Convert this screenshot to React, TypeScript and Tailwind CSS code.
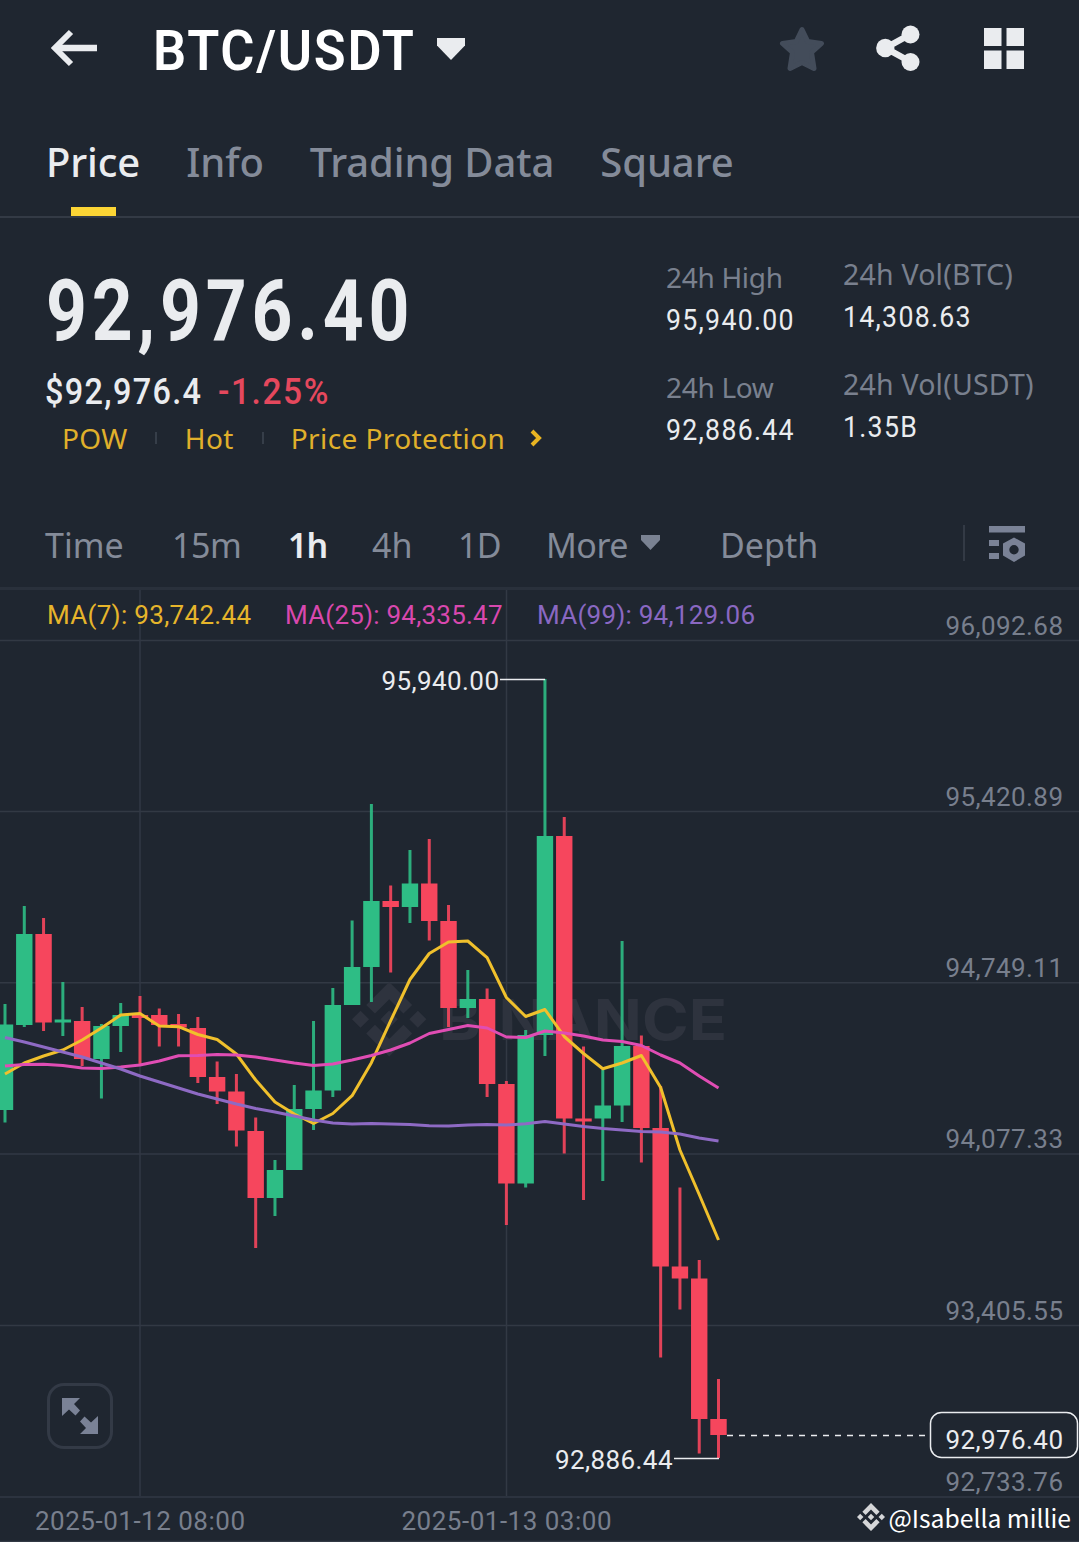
import type { ReactNode } from 'react'
import clsx from 'clsx'

const UP = '#2ebd85'
const DOWN = '#f6465d'

const tabs = ['Price', 'Info', 'Trading Data', 'Square']

// [direction, high, body top, body bottom, low]
type Candle = ['up' | 'down', number, number, number, number]

const candles: Candle[] = [
  ['up', 1004, 1024.5, 1110, 1122.5],
  ['up', 906, 934, 1025, 1027],
  ['down', 918, 934, 1022.5, 1031],
  ['up', 982, 1019.5, 1022.5, 1036],
  ['down', 1007, 1021, 1059, 1066],
  ['up', 1024, 1026, 1059, 1098.5],
  ['up', 1003, 1015, 1026, 1052],
  ['down', 996, 1015, 1018, 1066],
  ['down', 1008.5, 1015, 1025, 1046.5],
  ['down', 1014, 1024, 1027.5, 1046.5],
  ['down', 1017, 1028, 1077, 1083],
  ['down', 1061.5, 1077, 1091.5, 1104],
  ['down', 1074, 1091.5, 1130.5, 1146.5],
  ['down', 1117.5, 1131, 1198, 1248],
  ['up', 1160, 1170, 1198, 1216],
  ['up', 1085, 1109, 1170, 1170],
  ['up', 1021, 1090.5, 1109, 1130],
  ['up', 988, 1005, 1090.5, 1097],
  ['up', 920.5, 967, 1005, 1005],
  ['up', 804, 901, 967, 1002],
  ['down', 885.5, 901, 907, 972.5],
  ['up', 850, 883.5, 907, 923],
  ['down', 839, 883.5, 921, 940.5],
  ['down', 905, 921, 1008, 1027],
  ['up', 970, 999, 1008, 1018],
  ['down', 988.5, 999, 1084, 1097],
  ['down', 1081, 1084, 1183.5, 1225],
  ['up', 1030, 1035, 1183.5, 1187.5],
  ['up', 679, 836, 1035, 1056],
  ['down', 817, 836, 1118.5, 1153.5],
  ['down', 1046.5, 1118.5, 1121.5, 1200],
  ['up', 1070, 1105.5, 1118.5, 1181],
  ['up', 941, 1046, 1105.5, 1122],
  ['down', 1035.5, 1046, 1128, 1162.5],
  ['down', 1086, 1128, 1266.5, 1357.5],
  ['down', 1187.5, 1266.5, 1278.5, 1309.5],
  ['down', 1260, 1278.5, 1419, 1453.5],
  ['down', 1379, 1419, 1435, 1458],
]

const ma7 = [
  1074, 1063, 1056, 1050, 1040, 1028, 1015, 1013.5, 1026, 1026.7, 1034.5, 1039.5, 1054, 1080, 1102, 1114,
  1123.5, 1113.5, 1095.7, 1062.7, 1020.7, 979.5, 953.5, 942, 941, 957.7, 997.5, 1016.5, 1009.5, 1036.5,
  1053.5, 1068.7, 1063, 1055.5, 1087.5, 1150, 1194.5, 1240,
]
const ma25 = [
  1066, 1064.5, 1064.3, 1065.5, 1068, 1068.5, 1067, 1065, 1061, 1055.7, 1055.5, 1054.5, 1055, 1057, 1060,
  1063, 1065.5, 1064, 1060, 1055.5, 1050, 1043, 1033.5, 1029.5, 1025.5, 1028, 1037, 1037.5, 1031, 1033,
  1036, 1040, 1041.5, 1045.5, 1055, 1063, 1076, 1088,
]
const ma99 = [
  1037.5, 1042, 1047, 1052, 1057, 1063, 1069, 1076, 1082, 1088, 1094, 1099, 1104, 1108.5, 1112, 1116, 1120,
  1123, 1124, 1123.5, 1124, 1124.5, 1125.7, 1126, 1125, 1124.5, 1125, 1123.7, 1121.5, 1124, 1126.5, 1128.5,
  1130, 1131.5, 1132, 1134, 1138, 1141,
]

const priceAxis = [
  { y: 640.5, label: '96,092.68' },
  { y: 811.5, label: '95,420.89' },
  { y: 982.7, label: '94,749.11' },
  { y: 1154, label: '94,077.33' },
  { y: 1325.5, label: '93,405.55' },
]

const candleX = (i: number) => 5 + i * 19.284
const toPoints = (values: number[]) => values.map((y, i) => `${candleX(i)},${y}`).join(' ')

function Num({ className, box, children }: { className: string; box: string; children: ReactNode }) {
  return (
    <span className={clsx('block whitespace-nowrap', box)}>
      <span className={clsx('inline-block origin-left font-[Roboto,sans-serif]', className)}>{children}</span>
    </span>
  )
}

function BinanceMark({ className }: { className?: string }) {
  return (
    <svg viewBox="0 0 24 24" className={className} fill="currentColor">
      <path d="M12 0 19.4 7.4 16.6 10.2 12 5.6 7.4 10.2 4.6 7.4Z" />
      <path d="M12 24 19.4 16.6 16.6 13.8 12 18.4 7.4 13.8 4.6 16.6Z" />
      <path d="M12 9.2 14.8 12 12 14.8 9.2 12Z" />
      <path d="M2.75 9.25 5.5 12 2.75 14.75 0 12Z" />
      <path d="M21.25 9.25 24 12 21.25 14.75 18.5 12Z" />
    </svg>
  )
}

function Header() {
  return (
    <header className="flex h-[100px] items-center pl-[51px] pr-[55px]">
      <svg width="46" height="38" viewBox="0 0 46 38" className="-mt-1 shrink-0" fill="none" stroke="#eaecef">
        <path d="M46 19H5" strokeWidth="6.5" />
        <path d="M20 3 4 19 20 35" strokeWidth="6" />
      </svg>
      <h1 className="ml-[56px] mt-[2px] w-[260px]">
        <Num box="" className="scale-x-[0.95] text-[55px] font-semibold leading-[56px] tracking-[1.8px] text-white">
          BTC/USDT
        </Num>
      </h1>
      <svg width="28" height="22" viewBox="0 0 28 22" className="-mt-0.5 ml-[24px]" fill="#eaecef">
        <path d="M0 0H28V7.5L14 22 0 7.5Z" />
      </svg>
      <div className="ml-auto flex items-center">
        <svg width="46" height="48" viewBox="0 0 46 48" className="-mt-0.5" fill="#434c5a" stroke="#434c5a" strokeWidth="5" strokeLinejoin="round">
          <path d="M23 4.5 28.8 16.6 42.5 18.5 32.5 27.5 35 43.5 23 37.5 11 43.5 13.5 27.5 3.5 18.5 17.2 16.6Z" />
        </svg>
        <svg width="44" height="46" viewBox="0 0 44 46" className="-mt-1 ml-[51px]" fill="#eaecef" stroke="#eaecef">
          <path d="M34 9.5 9.5 23 34 36.5" fill="none" strokeWidth="6.5" />
          <circle cx="34.5" cy="9.5" r="9" stroke="none" />
          <circle cx="34.5" cy="37" r="9" stroke="none" />
          <circle cx="9.3" cy="23" r="9.2" stroke="none" />
        </svg>
        <svg width="40" height="41" viewBox="0 0 40 41" className="-mt-1 ml-[64px]" fill="#eaecef">
          <path d="M0 0H17.5V18H0ZM22.5 0H40V18H22.5ZM0 22.5H17.5V41H0ZM22.5 22.5H40V41H22.5Z" />
        </svg>
      </div>
    </header>
  )
}

function Tabs() {
  return (
    <nav className="flex h-[118px] gap-[46px] border-b-2 border-[#333a45] pl-[46px] font-['Noto_Sans',sans-serif] text-[40px] font-medium tracking-[-0.1px]">
      {tabs.map((tab, i) => (
        <div
          key={tab}
          className={clsx(
            'flex flex-col items-center justify-between whitespace-nowrap pt-[34px]',
            i === 0 ? 'text-[#eaecef]' : 'text-[#848b99]',
          )}
        >
          <span className="leading-[56px]">{tab}</span>
          {i === 0 && <span className="h-[9px] w-[45px] bg-[#fcd535]" />}
        </div>
      ))}
    </nav>
  )
}

function Stat({ label, value }: { label: string; value: string }) {
  return (
    <div className="h-[110px]">
      <div className="whitespace-nowrap text-[#79808e]">{label}</div>
      <Num box="mt-[6px] h-[36px]" className="scale-x-[0.92] text-[29px] leading-[36px] tracking-[1.4px] text-[#eaecef]">
        {value}
      </Num>
    </div>
  )
}

function Summary() {
  return (
    <section className="flex h-[282px] font-['Noto_Sans',sans-serif]">
      <div className="w-[666px] pl-[46px] pt-[49px]">
        <Num box="h-[88px]" className="scale-x-[0.83] text-[86px] font-bold leading-[88px] tracking-[5.8px] text-[#eaecef]">
          92,976.40
        </Num>
        <div className="mt-[18px] flex h-[38px] items-center">
          <Num box="-ml-px w-[173px]" className="scale-x-[0.9] text-[36px] font-medium leading-[38px] tracking-[1.5px] text-[#eaecef]">
            $92,976.4
          </Num>
          <Num box="" className="scale-x-[0.93] text-[36px] font-medium leading-[38px] tracking-[1.7px] text-[#e5485d]">
            -1.25%
          </Num>
        </div>
        <div className="mt-[7px] flex h-[40px] items-center pl-4 text-[28px] tracking-[0.4px] text-[#e0b02b]">
          <span>POW</span>
          <span className="ml-[27px] h-3 w-[2px] bg-[#363e49]" />
          <span className="ml-[28px]">Hot</span>
          <span className="ml-[28px] h-3 w-[2px] bg-[#363e49]" />
          <span className="ml-[27px]">Price Protection</span>
          <svg width="12" height="18" viewBox="0 0 12 18" className="ml-[25px]" fill="none" stroke="#e8b422" strokeWidth="4">
            <path d="M2 2 9 9 2 16" />
          </svg>
        </div>
      </div>
      <div className="w-[177px] pt-[41px] text-[28px] leading-[36px] tracking-[-0.3px]">
        <Stat label="24h High" value="95,940.00" />
        <Stat label="24h Low" value="92,886.44" />
      </div>
      <div className="pt-[38px] text-[28.5px] leading-[36px] tracking-[0.2px]">
        <Stat label="24h Vol(BTC)" value="14,308.63" />
        <Stat label="24h Vol(USDT)" value="1.35B" />
      </div>
    </section>
  )
}

function Intervals() {
  return (
    <div className="flex h-[90px] items-center border-b-[3px] border-[#29303b] pl-[45px] pr-[53px] pt-[3px] font-['Noto_Sans',sans-serif] text-[34px] text-[#848b99]">
      <span className="w-[127px]">Time</span>
      <span className="w-[116px] tracking-[-0.4px]">15m</span>
      <span className="w-[84px] font-semibold tracking-[-1px] text-[#eaecef]">1h</span>
      <span className="w-[86px]">4h</span>
      <span className="w-[88px] tracking-[-0.6px]">1D</span>
      <span className="w-[95px] tracking-[-0.5px]">More</span>
      <svg width="19" height="15" viewBox="0 0 19 15" className="-mt-1.5" fill="#7a8292">
        <path d="M0 0H19V5L9.5 15 0 5Z" />
      </svg>
      <span className="ml-[60px]">Depth</span>
      <span className="-mt-1 ml-auto h-[36px] w-[2px] bg-[#333a45]" />
      <svg width="37" height="37" viewBox="0 0 37 37" className="-mt-[3px] ml-[24px]" fill="#7a8296">
        <path d="M0 1H36V7.5H0ZM0 15H10V21H0ZM0 28H10V34H0Z" />
        <path fillRule="evenodd" d="M25 12.5 36 18.5V30.5L25 37 14 30.5V18.5ZM25 20A4.7 4.7 0 1 0 25 29.4 4.7 4.7 0 1 0 25 20Z" />
      </svg>
    </div>
  )
}

function Chart() {
  return (
    <div className="relative h-[952px]">
      <svg width="1079" height="952" viewBox="0 590 1079 952" className="block font-[Roboto,sans-serif] text-[26px]">
        <g stroke="#323944" strokeWidth="1.5">
          {priceAxis.map(({ y }) => (
            <line key={y} x1="0" x2="1079" y1={y} y2={y} />
          ))}
          <line x1="140" x2="140" y1="590" y2="1496" />
          <line x1="506.5" x2="506.5" y1="590" y2="1496" />
          <line x1="0" x2="1079" y1="1497" y2="1497" />
          <line x1="0" x2="1079" y1="1541.5" y2="1541.5" />
        </g>

        <g fill="#2e333e">
          <g transform="translate(352 982) scale(3.1)">
            <path d="M12 0 19.4 7.4 16.6 10.2 12 5.6 7.4 10.2 4.6 7.4Z" />
            <path d="M12 24 19.4 16.6 16.6 13.8 12 18.4 7.4 13.8 4.6 16.6Z" />
            <path d="M12 9.2 14.8 12 12 14.8 9.2 12Z" />
            <path d="M2.75 9.25 5.5 12 2.75 14.75 0 12Z" />
            <path d="M21.25 9.25 24 12 21.25 14.75 18.5 12Z" />
          </g>
          <text x="439" y="1040" textLength="288" lengthAdjust="spacingAndGlyphs" className="font-[Inter,sans-serif] text-[57px] font-bold">
            BINANCE
          </text>
        </g>

        {candles.map(([dir, high, top, bottom, low], i) => (
          <g key={i} fill={dir === 'up' ? UP : DOWN}>
            <rect x={candleX(i) - 1.5} y={high} width="3" height={low - high} opacity="0.9" />
            <rect x={candleX(i) - 8.2} y={top} width="16.4" height={bottom - top} />
          </g>
        ))}

        <g fill="none" strokeWidth="3" strokeLinejoin="round">
          <polyline points={toPoints(ma7)} stroke="#f0c02c" />
          <polyline points={toPoints(ma25)} stroke="#e04db4" />
          <polyline points={toPoints(ma99)} stroke="#8e6ac4" />
        </g>

        <text x="47" y="624" textLength="204" fill="#e6b52b">MA(7): 93,742.44</text>
        <text x="285" y="624" textLength="217.5" fill="#d848ae">MA(25): 94,335.47</text>
        <text x="537" y="624" textLength="218" fill="#8a68c2">MA(99): 94,129.06</text>

        <g fill="#787f8d">
          {priceAxis.map(({ y, label }) => (
            <text key={label} x="945.5" y={y - 5.7} textLength="117.5">{label}</text>
          ))}
          <text x="945.5" y="1491" textLength="117.5">92,733.76</text>
          <text x="35" y="1530" textLength="210">2025-01-12 08:00</text>
          <text x="401.5" y="1530" textLength="210">2025-01-13 03:00</text>
        </g>

        <g fill="#eaecef">
          <text x="381.5" y="690" textLength="117.5">95,940.00</text>
          <text x="555" y="1469" textLength="117.5">92,886.44</text>
          <path d="M500 679.5H545M674 1458.5H719" stroke="#eaecef" strokeWidth="1.5" />
          <path d="M727 1435.5H926" stroke="#eaecef" strokeWidth="1.5" strokeDasharray="6 6" />
          <rect x="930.5" y="1412.5" width="147" height="45" rx="11" fill="#1f2630" stroke="#eaecef" strokeWidth="1.5" />
          <text x="945.5" y="1449" textLength="117.5">92,976.40</text>
        </g>
      </svg>

      <button className="absolute left-[47px] top-[793px] flex size-[66px] items-center justify-center rounded-[17px] border-[3px] border-[#333a46]">
        <svg width="38" height="38" viewBox="0 0 38 38" fill="#7a8296">
          <path d="M1 1H19L13 7 19 13.5 14.5 18.5 8 12.5 1 19Z" />
          <path d="M37 37H19L25 31 19 24.5 23.5 19.5 30 25.5 37 19Z" />
        </svg>
      </button>

      <div className="absolute bottom-[5px] right-[8px] flex items-center gap-[3px] font-['Noto_Sans_CJK_SC',sans-serif] text-[24.7px] leading-[40px] text-white">
        <BinanceMark className="size-[28px] text-[#d5d6d8]" />
        @Isabella millie
      </div>
    </div>
  )
}

export default function App() {
  return (
    <div className="h-[1542px] w-[1079px] overflow-hidden bg-[#1f2630]">
      <Header />
      <Tabs />
      <Summary />
      <Intervals />
      <Chart />
    </div>
  )
}
